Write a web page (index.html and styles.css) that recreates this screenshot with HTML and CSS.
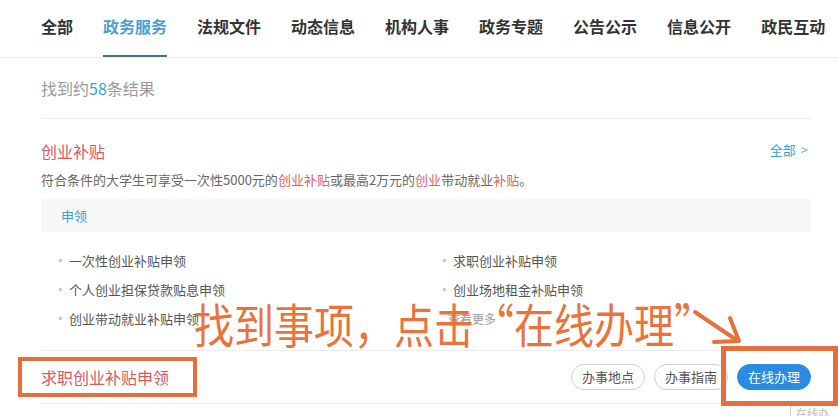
FILE: index.html
```html
<!DOCTYPE html>
<html lang="zh-CN">
<head>
<meta charset="utf-8">
<title>搜索结果</title>
<link rel="stylesheet" href="styles.css">
</head>
<body>
<div class="page">
  <nav class="tabs">
    <a class="tab">全部</a>
    <a class="tab active">政务服务</a>
    <a class="tab">法规文件</a>
    <a class="tab">动态信息</a>
    <a class="tab">机构人事</a>
    <a class="tab">政务专题</a>
    <a class="tab">公告公示</a>
    <a class="tab">信息公开</a>
    <a class="tab">政民互动</a>
  </nav>
  <div class="content">
    <div class="results">找到约<span class="num">58</span>条结果</div>
    <section class="card">
      <div class="card-head">
        <span class="card-title">创业补贴</span>
        <a class="more">全部 <span class="gt">&gt;</span></a>
      </div>
      <p class="desc">符合条件的大学生可享受一次性5000元的<em>创业补贴</em>或最高2万元的<em>创业</em>带动就业<em>补贴</em>。</p>
      <div class="group">申领</div>
      <ul class="items">
        <li class="item">一次性创业补贴申领</li>
        <li class="item">求职创业补贴申领</li>
        <li class="item">个人创业担保贷款贴息申领</li>
        <li class="item">创业场地租金补贴申领</li>
        <li class="item">创业带动就业补贴申领</li>
        <li class="item more-link">查看更多</li>
      </ul>
      <div class="row">
        <span class="row-title">求职创业补贴申领</span>
        <div class="actions">
          <a class="btn">办事地点</a>
          <a class="btn">办事指南</a>
          <a class="btn primary">在线办理</a>
        </div>
      </div>
    </section>
  </div>

  <div class="tip">在线办理</div>
  <div class="note">找到事项，点击“在线办理”</div>
  <svg class="arrow" width="60" height="50" viewBox="0 0 60 50">
    <path d="M3 4 L46 33" fill="none" stroke="#e8703a" stroke-width="4" stroke-linecap="round"/>
    <path d="M38 10 L47 33 L22 34" fill="none" stroke="#e8703a" stroke-width="4" stroke-linecap="round" stroke-linejoin="round"/>
  </svg>
  <div class="hl hl-title"></div>
  <div class="hl hl-btn"></div>
</div>
</body>
</html>
```
FILE: styles.css
```css
* { box-sizing: border-box; }
html, body { margin: 0; padding: 0; background: #fff; }
body {
  font-family: "Noto Sans CJK SC", "Noto Sans", "Liberation Sans", sans-serif;
  color: #333;
}
.page {
  position: relative;
  width: 838px;
  height: 416px;
  overflow: hidden;
}
.tabs {
  display: flex;
  align-items: flex-end;
  gap: 30px;
  height: 58px;
  padding-left: 41px;
  border-bottom: 1px solid #ececec;
}
.tab {
  font-size: 16px;
  font-weight: 700;
  line-height: 22px;
  color: #333;
  padding-bottom: 18px;
  border-bottom: 2px solid transparent;
  white-space: nowrap;
}
.tab.active {
  color: #4a9fd3;
  border-bottom-color: #3f6f90;
}
.content {
  margin-left: 41px;
  width: 770px;
}
.results {
  font-size: 16px;
  line-height: 22px;
  color: #999;
  padding: 19px 0 19px;
  border-bottom: 1px solid #ececec;
}
.results .num { color: #38a3c9; }
.card { padding-top: 21px; }
.card-head {
  display: flex;
  justify-content: space-between;
  align-items: center;
  line-height: 22px;
}
.card-title {
  font-size: 16px;
  color: #dd5760;
}
.more {
  font-size: 13px;
  color: #3aa2c9;
  margin-right: 3px;
  margin-top: -3px;
}
.more .gt { color: #6ab6d6; margin-left: 2px; }
.desc {
  margin: 8px 0 0;
  font-size: 13px;
  line-height: 20px;
  color: #666;
}
.desc em { font-style: normal; color: #e0605f; }
.group {
  margin-top: 9px;
  height: 33px;
  line-height: 33px;
  padding-left: 20px;
  background: #f7f7f7;
  font-size: 13px;
  color: #3aa2c9;
}
.items {
  list-style: none;
  margin: 0;
  padding: 14px 0 17px 18px;
  display: grid;
  grid-template-columns: 384px 1fr;
  border-bottom: 1px solid #ececec;
}
.item {
  position: relative;
  font-size: 13px;
  line-height: 29px;
  color: #555;
  padding-left: 10px;
}
.item::before {
  content: "";
  position: absolute;
  left: 0;
  top: 13px;
  width: 3px;
  height: 3px;
  background: #c8c8c8;
}
.item.more-link {
  font-size: 12px;
  color: #999;
  padding-left: 5px;
}
.item.more-link::before { display: none; }
.row {
  display: flex;
  justify-content: space-between;
  align-items: center;
  height: 53px;
  border-bottom: 1px solid #ececec;
}
.row-title {
  font-size: 16px;
  color: #dd5760;
}
.actions {
  display: flex;
  gap: 9px;
  align-items: center;
}
.btn {
  display: inline-block;
  height: 26px;
  line-height: 24px;
  padding: 0 10px;
  border: 1px solid #cfcfcf;
  border-radius: 13px;
  font-size: 13px;
  color: #555;
  white-space: nowrap;
}
.btn.primary {
  background: #2a8be0;
  border-color: #2a8be0;
  color: #fff;
}
.tip {
  position: absolute;
  left: 790px;
  top: 405px;
  padding: 0 0 0 5px;
  border-left: 1px solid #cfcfcf;
  border-top: 1px solid #e6e6e6;
  font-size: 11px;
  line-height: 14px;
  color: #bbb;
  background: #fff;
}
.note {
  position: absolute;
  left: 194px;
  top: 297px;
  font-size: 40px;
  line-height: 46px;
  color: #e8743c;
  white-space: nowrap;
  transform: scaleY(1.16);
  transform-origin: left top;
}
.arrow {
  position: absolute;
  left: 692px;
  top: 308px;
}
.hl {
  position: absolute;
  border: 4px solid #e46f3c;
}
.hl-title {
  left: 18px;
  top: 357px;
  width: 179px;
  height: 40px;
}
.hl-btn {
  left: 721px;
  top: 346px;
  width: 117px;
  height: 60px;
  border-width: 5px;
}
```
